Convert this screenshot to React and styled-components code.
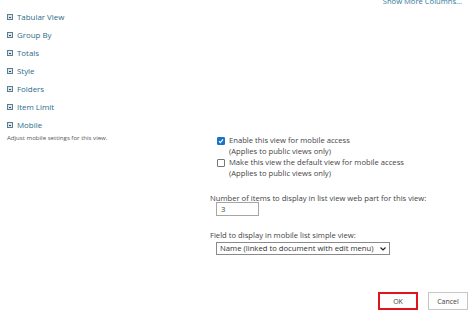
import React from 'react'
import styled, { createGlobalStyle } from 'styled-components'

const GlobalStyle = createGlobalStyle`
    html, body {
        margin: 0;
        padding: 0;
        background: #ffffff;
    }
    body {
        width: 474px;
        height: 322px;
        overflow: hidden;
        font-family: "Open Sans", "Liberation Sans", sans-serif;
        color: #444444;
    }
`

const Page = styled.div`
    width: 474px;
    height: 322px;
    display: flex;
    flex-direction: column;
    box-sizing: border-box;
`
const TopBar = styled.div`
    display: flex;
    justify-content: flex-end;
    height: 6px;
    padding-right: 12px;
    overflow: visible;
`
const MoreLink = styled.a`
    font-size: 7.6px;
    color: #2d7a9c;
    line-height: 8px;
    margin-top: -3px;
    text-decoration: none;
`
const SectionList = styled.div`
    display: flex;
    flex-direction: column;
    padding: 2px 0 0 7px;
`
const SectionRow = styled.div`
    display: flex;
    align-items: center;
    height: 18px;
    font-size: 7.9px;
    color: #2a6b8a;
`
const Toggle = styled.span`
    width: 4px;
    height: 4px;
    border: 1px solid #5a7f93;
    background: #dfe8ee;
    margin-right: 4px;
    position: relative;
    box-sizing: content-box;
    &::after {
        content: '';
        position: absolute;
        left: 1px;
        right: 1px;
        top: 1.5px;
        height: 1px;
        background: #2f4f60;
    }
`
const MobileBody = styled.div`
    display: grid;
    grid-template-columns: 209px 1fr;
    padding-left: 7px;
`
const Desc = styled.div`
    font-size: 6.1px;
    color: #555555;
    line-height: 9px;
    margin-top: -1px;
`
const Settings = styled.div`
    display: flex;
    flex-direction: column;
    padding-top: 1px;
    font-size: 7.65px;
    line-height: 11px;
    color: #444444;
`
const CheckRow = styled.label`
    display: flex;
    align-items: center;
    gap: 4px;
    padding-left: 1px;
`
const Box = styled.span`
    width: 8px;
    height: 8px;
    box-sizing: border-box;
    border-radius: 1px;
    border: 1px solid ${p => (p.checked ? '#1a73c8' : '#767676')};
    background: ${p => (p.checked ? '#1a73c8' : '#ffffff')};
    display: flex;
    align-items: center;
    justify-content: center;
`
const Note = styled.div`
    padding-left: 13px;
`
const FieldLabel = styled.div`
    margin-top: ${p => p.gap}px;
    margin-left: -6px;
`
const NumberInput = styled.div`
    width: 43px;
    height: 14px;
    box-sizing: border-box;
    border: 1px solid #a6a6a6;
    margin-top: -2px;
    padding-left: 4px;
    line-height: 12px;
`
const Select = styled.div`
    width: 174px;
    height: 13px;
    box-sizing: border-box;
    border: 1px solid #8a8a8a;
    margin-top: 1px;
    padding: 0 3px;
    display: flex;
    align-items: center;
    justify-content: space-between;
    line-height: 11px;
    font-size: 7.7px;
    color: #333333;
`
const Buttons = styled.div`
    margin-top: auto;
    display: flex;
    justify-content: flex-end;
    gap: 10px;
    padding: 0 6px 12px 0;
`
const Button = styled.button`
    width: 40px;
    height: 18px;
    box-sizing: border-box;
    font-family: "Open Sans", "Liberation Sans", sans-serif;
    font-size: 7px;
    color: #444444;
    background: #fdfdfd;
    border: ${p => (p.primary ? '2px solid #e0141e' : '1px solid #c6c6c6')};
    padding: 0;
`

const sections = ['Tabular View', 'Group By', 'Totals', 'Style', 'Folders', 'Item Limit', 'Mobile']

const Tick = () => (
    <svg width="6" height="6" viewBox="0 0 6 6">
        <path d="M1 3.2 L2.4 4.6 L5 1.4" stroke="#fff" strokeWidth="1.2" fill="none" />
    </svg>
)

const App = () => {
    return (
        <Page>
            <GlobalStyle />
            <TopBar>
                <MoreLink>Show More Columns...</MoreLink>
            </TopBar>
            <SectionList>
                {sections.map(s => (
                    <SectionRow key={s}>
                        <Toggle />
                        {s}
                    </SectionRow>
                ))}
            </SectionList>
            <MobileBody>
                <Desc>Adjust mobile settings for this view.</Desc>
                <Settings>
                    <CheckRow>
                        <Box checked><Tick /></Box>
                        Enable this view for mobile access
                    </CheckRow>
                    <Note>(Applies to public views only)</Note>
                    <CheckRow>
                        <Box />
                        Make this view the default view for mobile access
                    </CheckRow>
                    <Note>(Applies to public views only)</Note>
                    <FieldLabel gap={14}>Number of items to display in list view web part for this view:</FieldLabel>
                    <NumberInput>3</NumberInput>
                    <FieldLabel gap={14}>Field to display in mobile list simple view:</FieldLabel>
                    <Select>
                        Name (linked to document with edit menu)
                        <svg width="6" height="4" viewBox="0 0 6 4">
                            <path d="M0.5 0.5 L3 3 L5.5 0.5" stroke="#222" strokeWidth="1.2" fill="none" />
                        </svg>
                    </Select>
                </Settings>
            </MobileBody>
            <Buttons>
                <Button primary>OK</Button>
                <Button>Cancel</Button>
            </Buttons>
        </Page>
    )
}

export default App
